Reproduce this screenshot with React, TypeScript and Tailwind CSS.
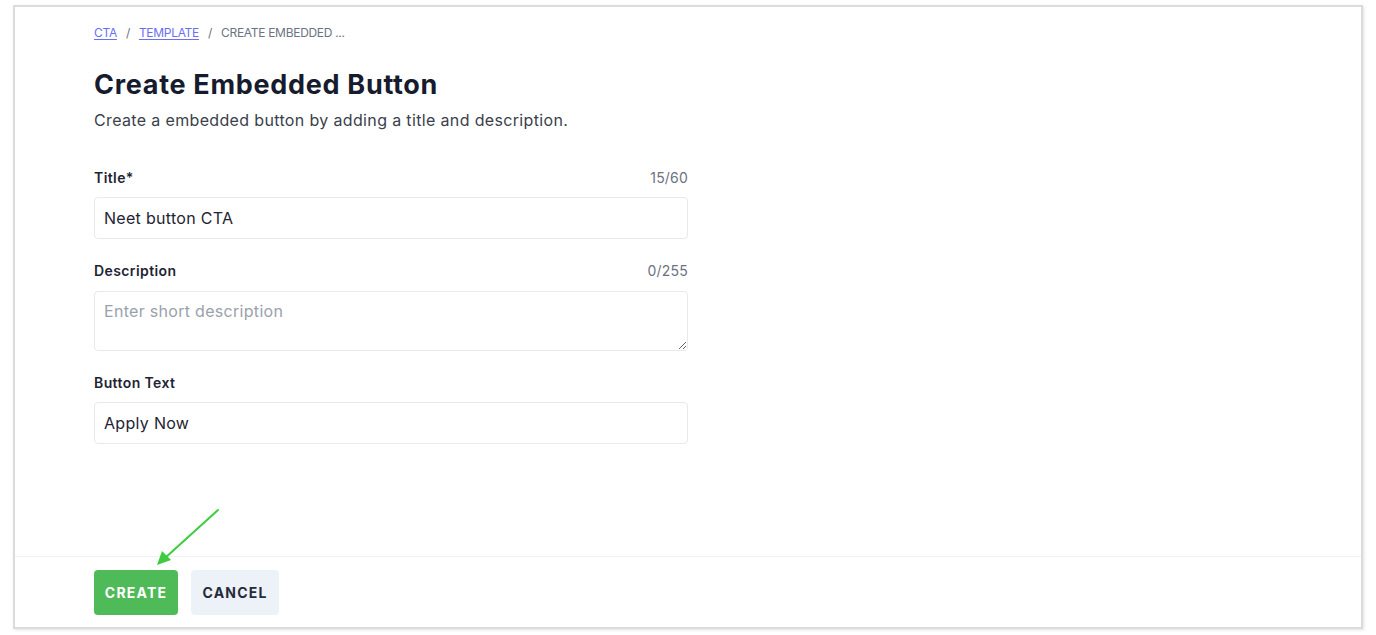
import { useState } from "react";

const font = { fontFamily: "Inter, 'Noto Sans', sans-serif" };

function Field({
  label,
  count,
  children,
}: {
  label: string;
  count?: string;
  children: React.ReactNode;
}) {
  return (
    <div className="flex flex-col">
      <div className="flex items-center justify-between h-[20px] mb-[10px]">
        <span className="text-[14px] font-semibold text-[#1f2433] tracking-[0.4px]">{label}</span>
        {count && <span className="text-[14px] text-[#6b7280] tracking-[0.2px]">{count}</span>}
      </div>
      {children}
    </div>
  );
}

export default function App() {
  const [title, setTitle] = useState("Neet button CTA");
  const [desc, setDesc] = useState("");
  const [btn, setBtn] = useState("Apply Now");

  return (
    <div className="w-[1376px] h-[635px] bg-white pl-[13px] pt-[5px]" style={font}>
      <div className="relative w-[1350px] h-[624px] bg-white border-2 border-[#dcdcdc] shadow-[1px_1px_3px_rgba(0,0,0,0.12)] flex flex-col">
        <div className="flex-1 pl-[79px] pt-[16px]">
          {/* breadcrumb */}
          <nav className="flex items-center gap-[9px] text-[12px] tracking-tight h-[20px]">
            <a className="text-[#6b6ef5] underline underline-offset-2">CTA</a>
            <span className="text-[#6b7280]">/</span>
            <a className="text-[#6b6ef5] underline underline-offset-2">TEMPLATE</a>
            <span className="text-[#6b7280]">/</span>
            <span className="text-[#6b7280]">CREATE EMBEDDED ...</span>
          </nav>

          <h1 className="mt-[26px] text-[27px] leading-[32px] font-bold text-[#161b2e] tracking-[0.7px]">
            Create Embedded Button
          </h1>
          <p className="mt-[7px] text-[16px] leading-[24px] text-[#3a3f4b] tracking-[0.35px]">
            Create a embedded button by adding a title and description.
          </p>

          <div className="w-[594px] mt-[35px] flex flex-col gap-[21px]">
            <Field label="Title*" count={`${title.length}/60`}>
              <input
                value={title}
                onChange={(e) => setTitle(e.target.value)}
                className="h-[42px] px-[9px] rounded-[4px] border border-[#e6e9f0] text-[16px] tracking-[0.3px] text-[#1f2433] outline-none"
              />
            </Field>
            <Field label="Description" count={`${desc.length}/255`}>
              <textarea
                value={desc}
                onChange={(e) => setDesc(e.target.value)}
                placeholder="Enter short description"
                className="mt-px h-[60px] px-[9px] py-[8px] rounded-[4px] border border-[#e6e9f0] text-[16px] leading-[22px] tracking-[0.3px] text-[#1f2433] placeholder:text-[#9aa1ad] outline-none resize-y"
              />
            </Field>
            <Field label="Button Text">
              <input
                value={btn}
                onChange={(e) => setBtn(e.target.value)}
                className="h-[42px] px-[9px] rounded-[4px] border border-[#e6e9f0] text-[16px] tracking-[0.3px] text-[#1f2433] outline-none"
              />
            </Field>
          </div>
        </div>

        {/* footer */}
        <div className="border-t border-[#f0f1f4] h-[71px] pl-[79px] pt-[13px] flex items-start gap-[13px]">
          <button className="h-[45px] w-[84px] rounded-[4px] bg-[#4fba58] text-white text-[14px] font-bold tracking-[1.2px]">
            CREATE
          </button>
          <button className="h-[45px] w-[88px] rounded-[4px] bg-[#edf1f8] text-[#262b3a] text-[14px] font-bold tracking-[1.2px]">
            CANCEL
          </button>
        </div>

        {/* annotation arrow */}
        <svg
          className="absolute left-[138px] top-[500px] pointer-events-none"
          width="70"
          height="64"
          viewBox="0 0 70 64"
        >
          <line x1="65" y1="3" x2="12" y2="51" stroke="#3fcb3f" strokeWidth="2" strokeLinecap="round" />
          <polygon points="4,58 9,44 18,53" fill="#3fcb3f" />
        </svg>
      </div>
    </div>
  );
}
